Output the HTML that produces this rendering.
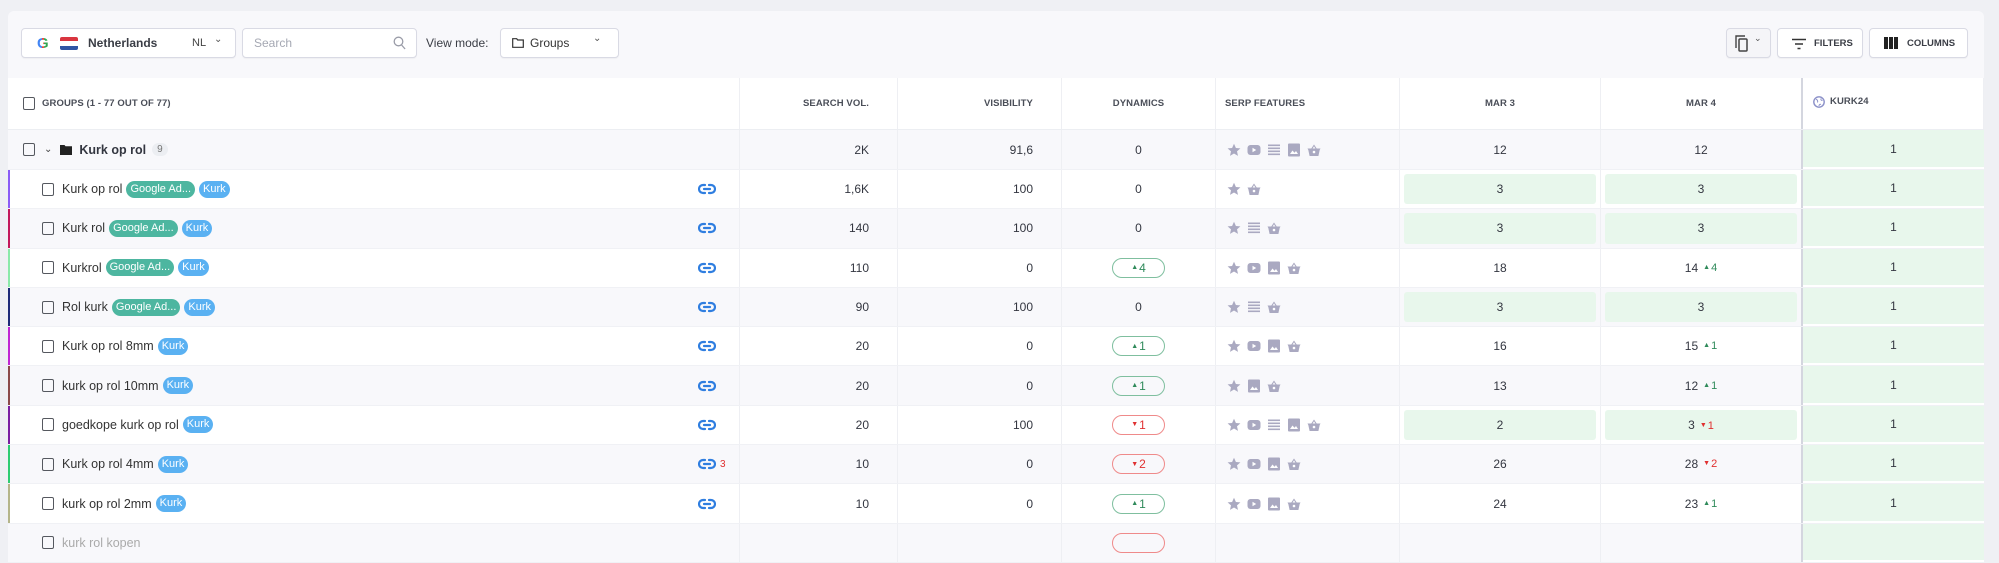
<!DOCTYPE html>
<html><head><meta charset="utf-8">
<style>
*{box-sizing:border-box;margin:0;padding:0}
body{width:1999px;height:535px;overflow:hidden;background:#eff0f4;font-family:"Liberation Sans",sans-serif;color:#333640;font-size:12px;position:relative}
.panel{position:absolute;left:8px;top:11px;width:1976px;height:540px;background:#f8f8fb;border-radius:6px 6px 0 0}
.btn{position:absolute;top:28px;height:30px;background:#fff;border:1px solid #d9dae4;border-radius:4px;display:flex;align-items:center;box-shadow:0 1px 1px rgba(0,0,0,.04)}
.grid{position:absolute;left:8px;width:1976px;display:grid;grid-template-columns:732px 158px 164px 154px 184px 201px 202px 181px}
.grid>div{border-right:1px solid #eeeff3;display:flex;align-items:center;position:relative}
.hdr{top:78px;height:52px;background:#fff;border-bottom:1px solid #eceef2}
.hdr>div{font-size:9.5px;font-weight:bold;color:#4a4e58;letter-spacing:.1px}
.row{height:39.3px;border-bottom:1px solid #f0f1f5}
.w{background:#fff}.g{background:#f8f8fb}
.r{justify-content:flex-end;padding-right:28px}
.c{justify-content:center}
.cb{width:12px;height:13px;border:1.6px solid #55585f;border-radius:2px;display:inline-block;flex:none}
.kw{padding-left:34px}
.kw .t{margin-left:8px;font-size:12.5px;color:#333}
.bd{display:inline-block;height:17px;line-height:17px;border-radius:9px;color:#fff;font-size:11px;padding:0 4px;margin-left:4px}
.ga{background:#4db6a0}.ku{background:#5ab1f2}
.link{position:absolute;left:690px;top:50%;margin-top:-6px}
.bar{position:absolute;left:0;top:0;bottom:0;width:2px}
.pill{width:53px;height:20px;border-radius:10px;border:1.3px solid #7fbf9f;display:flex;align-items:center;justify-content:center;font-size:12px;color:#2f8a5a}
.pill.dn{border-color:#ef8a8a;color:#e03030}
.up{color:#2f8a5a;font-size:11px;margin-left:5px}.dnn{color:#e03030;font-size:11px;margin-left:5px}
.tri{font-size:7px;vertical-align:2px;margin-right:1px}
.serp{padding-left:11px;gap:6px}
.serp svg{width:14px;height:14px;fill:#aaa9c1}
.gc{position:absolute;left:4px;right:4px;top:4px;bottom:4px;background:#e8f7ec;border-radius:3px}
.v{position:relative;z-index:1}
.k24{background:#e8f7ec;border-bottom:2px solid #fff;border-right:none!important}
</style></head><body>
<svg width="0" height="0" style="position:absolute">
<defs>
<symbol id="star" viewBox="0 0 14 14"><path d="M7 .8l1.9 4.2 4.5.4-3.4 3 1 4.5L7 10.5 3 12.9l1-4.5-3.4-3 4.5-.4z"/></symbol>
<symbol id="vid" viewBox="0 0 14 14"><rect x="0.5" y="2" width="13" height="10" rx="3"/><path d="M5.5 4.8v4.4L9.2 7z" fill="#fff"/></symbol>
<symbol id="list" viewBox="0 0 14 14"><rect x="1" y="1.5" width="12" height="1.6"/><rect x="1" y="4.5" width="12" height="1.6"/><rect x="1" y="7.5" width="12" height="1.6"/><rect x="1" y="10.5" width="12" height="1.6"/></symbol>
<symbol id="img" viewBox="0 0 14 14"><rect x="1" y="0.5" width="12" height="13" rx="1"/><path d="M3 11l2.5-3.5 2 2.3 1.5-1.8 2 3z" fill="#fff"/></symbol>
<symbol id="bask" viewBox="0 0 14 14"><path d="M4.3 5.5L7 1.5l2.7 4h-1.3L7 3.3 5.6 5.5zM.5 5.5h13l-.8 1.5-1.3 6H2.6L1.3 7z"/><circle cx="7" cy="9" r="1.3" fill="#fff"/></symbol>
<symbol id="lnk" viewBox="0 0 18 12"><path d="M7 2H5a4 4 0 000 8h2M11 2h2a4 4 0 010 8h-2M6 6h6" fill="none" stroke="#2f7ee0" stroke-width="2.2" stroke-linecap="round"/></symbol>
</defs></svg>

<div class="panel"></div>

<div class="btn" style="left:21px;width:215px">
 <span style="position:absolute;left:15px;top:6px;font-weight:bold;font-size:15px;background:linear-gradient(90deg,#4285f4 0 40%,#ea4335 40% 60%,#34a853 60%);-webkit-background-clip:text;color:transparent">G</span>
 <span style="position:absolute;left:38px;top:8px;width:18px;height:13px;border-radius:2px;overflow:hidden;display:flex;flex-direction:column"><i style="flex:1;background:#d9353f"></i><i style="flex:1;background:#fff"></i><i style="flex:1;background:#2f55a4"></i></span>
 <span style="position:absolute;left:66px;top:7px;font-weight:bold;font-size:12px;color:#3a3d45">Netherlands</span>
 <span style="position:absolute;left:170px;top:8px;font-size:11px;color:#444">NL</span>
 <span style="position:absolute;left:192px;top:5px;font-size:10px;color:#555">&#8964;</span>
</div>
<div class="btn" style="left:242px;width:175px">
 <span style="position:absolute;left:11px;top:7px;color:#a5a8b3;font-size:12px">Search</span>
 <svg style="position:absolute;left:150px;top:7px" width="13" height="14" viewBox="0 0 13 14"><circle cx="5.5" cy="5.5" r="4.3" fill="none" stroke="#9a9ca8" stroke-width="1.3"/><path d="M8.6 9l3.5 4" stroke="#9a9ca8" stroke-width="1.3"/></svg>
</div>
<span style="position:absolute;left:426px;top:36px;font-size:12px;color:#3a3d45">View mode:</span>
<div class="btn" style="left:500px;width:119px">
 <svg style="position:absolute;left:11px;top:9px" width="12" height="10" viewBox="0 0 12 10"><path d="M.7 .7h4l1 1.3h5.6v7.3H.7z" fill="none" stroke="#333" stroke-width="1.2"/></svg>
 <span style="position:absolute;left:29px;top:7px;font-size:12px;color:#333">Groups</span>
 <span style="position:absolute;left:92px;top:4px;font-size:10px;color:#555">&#8964;</span>
</div>
<div class="btn" style="left:1726px;width:45px;background:#f5f5f8">
 <svg style="position:absolute;left:8px;top:6px" width="14" height="17" viewBox="0 0 14 17"><path d="M1 13V1h9" fill="none" stroke="#444" stroke-width="1.4"/><rect x="4" y="4" width="8" height="12" rx="1" fill="none" stroke="#444" stroke-width="1.5"/></svg>
 <span style="position:absolute;left:27px;top:4px;font-size:9px;color:#555">&#8964;</span>
</div>
<div class="btn" style="left:1777px;width:86px">
 <svg style="position:absolute;left:13px;top:9px" width="16" height="12" viewBox="0 0 16 12"><path d="M1 1.5h14M4 6h8M6.5 10.5h3" stroke="#333" stroke-width="1.6"/></svg>
 <span style="position:absolute;left:36px;top:9px;font-size:9.5px;font-weight:bold;color:#3a3d45">FILTERS</span>
</div>
<div class="btn" style="left:1869px;width:99px">
 <svg style="position:absolute;left:14px;top:8px" width="14" height="12" viewBox="0 0 14 12"><rect x="0" y="0" width="4" height="12" fill="#222"/><rect x="5" y="0" width="4" height="12" fill="#222"/><rect x="10" y="0" width="4" height="12" fill="#222"/></svg>
 <span style="position:absolute;left:37px;top:9px;font-size:9.5px;font-weight:bold;color:#3a3d45">COLUMNS</span>
</div>

<div class="grid hdr">
 <div style="padding-left:15px"><span class="cb"></span><span style="margin-left:7px">GROUPS (1 - 77 OUT OF 77)</span></div>
 <div class="r">SEARCH VOL.</div>
 <div class="r">VISIBILITY</div>
 <div class="c">DYNAMICS</div>
 <div style="padding-left:9px">SERP FEATURES</div>
 <div class="c">MAR 3</div>
 <div class="c" style="border-right:2px solid #d4d6df">MAR 4</div>
 <div style="padding-left:10px;padding-bottom:4px"><svg width="12" height="12" viewBox="0 0 12 12" style="margin-right:5px"><circle cx="6" cy="6" r="5.2" fill="none" stroke="#8b90c8" stroke-width="1.4"/><path d="M3 3.5c1.5 0 2 1.5 1.5 3M8 2.5c-.5 1.5.5 2 1.5 2M6 10c0-1.5 1-2 2-1.5" stroke="#8b90c8" fill="none"/></svg>KURK24</div>
</div>

<div style="position:absolute;left:8px;top:130px;width:1976px">
<div class="grid row g" style="position:relative;left:0;height:40px">
 <div style="padding-left:15px"><span class="cb"></span><span style="margin-left:9px;font-size:10px;color:#444">&#8964;</span><svg style="margin-left:8px" width="12" height="10" viewBox="0 0 12 10"><path d="M0 0h4.5l1 1.3H12V10H0z" fill="#222"/></svg><span style="margin-left:7px;font-weight:bold;font-size:12.5px">Kurk op rol</span><span style="margin-left:6px;background:#eceef2;color:#777;border-radius:8px;padding:1px 5px;font-size:10px">9</span></div>
 <div class="r">2K</div><div class="r">91,6</div><div class="c">0</div>
 <div class="serp"><svg><use href="#star"/></svg><svg><use href="#vid"/></svg><svg><use href="#list"/></svg><svg><use href="#img"/></svg><svg><use href="#bask"/></svg></div>
 <div class="c">12</div><div class="c" style="border-right:2px solid #d4d6df">12</div><div class="c k24">1</div>
</div>

<div class="grid row w" style="position:relative;left:0">
 <div class="kw"><i class="bar" style="background:#8b5cf6"></i><span class="cb"></span><span class="t">Kurk op rol</span><span class="bd ga">Google Ad...</span><span class="bd ku">Kurk</span><svg class="link" width="18" height="12"><use href="#lnk"/></svg></div>
 <div class="r">1,6K</div><div class="r">100</div><div class="c">0</div>
 <div class="serp"><svg><use href="#star"/></svg><svg><use href="#bask"/></svg></div>
 <div class="c"><i class="gc"></i><span class="v">3</span></div><div class="c" style="border-right:2px solid #d4d6df"><i class="gc"></i><span class="v">3</span></div><div class="c k24">1</div>
</div>

<div class="grid row g" style="position:relative;left:0">
 <div class="kw"><i class="bar" style="background:#c2185b"></i><span class="cb"></span><span class="t">Kurk rol</span><span class="bd ga">Google Ad...</span><span class="bd ku">Kurk</span><svg class="link" width="18" height="12"><use href="#lnk"/></svg></div>
 <div class="r">140</div><div class="r">100</div><div class="c">0</div>
 <div class="serp"><svg><use href="#star"/></svg><svg><use href="#list"/></svg><svg><use href="#bask"/></svg></div>
 <div class="c"><i class="gc"></i><span class="v">3</span></div><div class="c" style="border-right:2px solid #d4d6df"><i class="gc"></i><span class="v">3</span></div><div class="c k24">1</div>
</div>

<div class="grid row w" style="position:relative;left:0">
 <div class="kw"><i class="bar" style="background:#8ae9a9"></i><span class="cb"></span><span class="t">Kurkrol</span><span class="bd ga">Google Ad...</span><span class="bd ku">Kurk</span><svg class="link" width="18" height="12"><use href="#lnk"/></svg></div>
 <div class="r">110</div><div class="r">0</div><div class="c"><span class="pill"><span class="tri">&#9650;</span>4</span></div>
 <div class="serp"><svg><use href="#star"/></svg><svg><use href="#vid"/></svg><svg><use href="#img"/></svg><svg><use href="#bask"/></svg></div>
 <div class="c">18</div><div class="c" style="border-right:2px solid #d4d6df">14<span class="up"><span class="tri">&#9650;</span>4</span></div><div class="c k24">1</div>
</div>

<div class="grid row g" style="position:relative;left:0">
 <div class="kw"><i class="bar" style="background:#1e2a78"></i><span class="cb"></span><span class="t">Rol kurk</span><span class="bd ga">Google Ad...</span><span class="bd ku">Kurk</span><svg class="link" width="18" height="12"><use href="#lnk"/></svg></div>
 <div class="r">90</div><div class="r">100</div><div class="c">0</div>
 <div class="serp"><svg><use href="#star"/></svg><svg><use href="#list"/></svg><svg><use href="#bask"/></svg></div>
 <div class="c"><i class="gc"></i><span class="v">3</span></div><div class="c" style="border-right:2px solid #d4d6df"><i class="gc"></i><span class="v">3</span></div><div class="c k24">1</div>
</div>

<div class="grid row w" style="position:relative;left:0">
 <div class="kw"><i class="bar" style="background:#c026d3"></i><span class="cb"></span><span class="t">Kurk op rol 8mm</span><span class="bd ku">Kurk</span><svg class="link" width="18" height="12"><use href="#lnk"/></svg></div>
 <div class="r">20</div><div class="r">0</div><div class="c"><span class="pill"><span class="tri">&#9650;</span>1</span></div>
 <div class="serp"><svg><use href="#star"/></svg><svg><use href="#vid"/></svg><svg><use href="#img"/></svg><svg><use href="#bask"/></svg></div>
 <div class="c">16</div><div class="c" style="border-right:2px solid #d4d6df">15<span class="up"><span class="tri">&#9650;</span>1</span></div><div class="c k24">1</div>
</div>

<div class="grid row g" style="position:relative;left:0">
 <div class="kw"><i class="bar" style="background:#8b4a4a"></i><span class="cb"></span><span class="t">kurk op rol 10mm</span><span class="bd ku">Kurk</span><svg class="link" width="18" height="12"><use href="#lnk"/></svg></div>
 <div class="r">20</div><div class="r">0</div><div class="c"><span class="pill"><span class="tri">&#9650;</span>1</span></div>
 <div class="serp"><svg><use href="#star"/></svg><svg><use href="#img"/></svg><svg><use href="#bask"/></svg></div>
 <div class="c">13</div><div class="c" style="border-right:2px solid #d4d6df">12<span class="up"><span class="tri">&#9650;</span>1</span></div><div class="c k24">1</div>
</div>

<div class="grid row w" style="position:relative;left:0">
 <div class="kw"><i class="bar" style="background:#7b1fa2"></i><span class="cb"></span><span class="t">goedkope kurk op rol</span><span class="bd ku">Kurk</span><svg class="link" width="18" height="12"><use href="#lnk"/></svg></div>
 <div class="r">20</div><div class="r">100</div><div class="c"><span class="pill dn"><span class="tri">&#9660;</span>1</span></div>
 <div class="serp"><svg><use href="#star"/></svg><svg><use href="#vid"/></svg><svg><use href="#list"/></svg><svg><use href="#img"/></svg><svg><use href="#bask"/></svg></div>
 <div class="c"><i class="gc"></i><span class="v">2</span></div><div class="c" style="border-right:2px solid #d4d6df"><i class="gc"></i><span class="v">3<span class="dnn"><span class="tri">&#9660;</span>1</span></span></div><div class="c k24">1</div>
</div>

<div class="grid row g" style="position:relative;left:0">
 <div class="kw"><i class="bar" style="background:#2ecc71"></i><span class="cb"></span><span class="t">Kurk op rol 4mm</span><span class="bd ku">Kurk</span><svg class="link" width="18" height="12"><use href="#lnk"/></svg><span style="position:absolute;left:712px;color:#e03030;font-size:10px;top:14px">3</span></div>
 <div class="r">10</div><div class="r">0</div><div class="c"><span class="pill dn"><span class="tri">&#9660;</span>2</span></div>
 <div class="serp"><svg><use href="#star"/></svg><svg><use href="#vid"/></svg><svg><use href="#img"/></svg><svg><use href="#bask"/></svg></div>
 <div class="c">26</div><div class="c" style="border-right:2px solid #d4d6df">28<span class="dnn"><span class="tri">&#9660;</span>2</span></div><div class="c k24">1</div>
</div>

<div class="grid row w" style="position:relative;left:0">
 <div class="kw"><i class="bar" style="background:#b5b58a"></i><span class="cb"></span><span class="t">kurk op rol 2mm</span><span class="bd ku">Kurk</span><svg class="link" width="18" height="12"><use href="#lnk"/></svg></div>
 <div class="r">10</div><div class="r">0</div><div class="c"><span class="pill"><span class="tri">&#9650;</span>1</span></div>
 <div class="serp"><svg><use href="#star"/></svg><svg><use href="#vid"/></svg><svg><use href="#img"/></svg><svg><use href="#bask"/></svg></div>
 <div class="c">24</div><div class="c" style="border-right:2px solid #d4d6df">23<span class="up"><span class="tri">&#9650;</span>1</span></div><div class="c k24">1</div>
</div>

<div class="grid row g" style="position:relative;left:0">
 <div class="kw"><span class="cb"></span><span class="t" style="color:#aaa">kurk rol kopen</span></div>
 <div class="r"></div><div class="r"></div><div class="c"><span class="pill dn"></span></div>
 <div class="serp"></div>
 <div class="c"></div><div class="c" style="border-right:2px solid #d4d6df"></div><div class="c k24"></div>
</div>
</div>
</body></html>
